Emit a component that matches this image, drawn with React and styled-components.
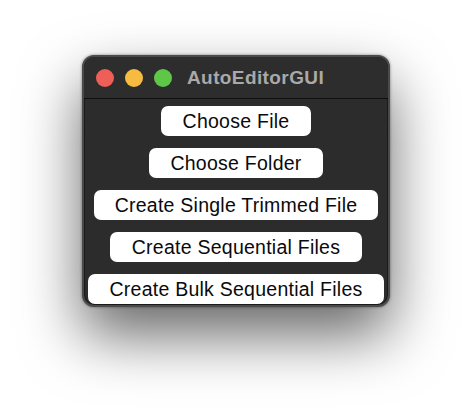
import React from "react";
import styled, { createGlobalStyle } from "styled-components";

const Global = createGlobalStyle`
  html, body { margin: 0; padding: 0; background: #ffffff; }
  body { font-family: "Liberation Sans", Arial, sans-serif; }
`;

const Stage = styled.div`
  width: 474px;
  height: 417px;
  box-sizing: border-box;
  padding: 55px 0 0 82px;
  background: #ffffff;
  overflow: hidden;
`;

const Window = styled.div`
  width: 308px;
  height: 252px;
  box-sizing: border-box;
  background: #2c2c2c;
  border-radius: 12px;
  border: 2px solid #4a4a4a;
  box-shadow: 0 0 0 1px #1a1a1a inset, 0 28px 60px rgba(0, 0, 0, 0.6), 0 0 3px rgba(0,0,0,0.45);
  display: flex;
  flex-direction: column;
  overflow: hidden;
`;

const TitleBar = styled.div`
  height: 41px;
  flex: none;
  display: flex;
  align-items: center;
  gap: 11px;
  padding-left: 12px;
  border-bottom: 1px solid #0f0f0f;
  background: #2d2d2d;
`;

const Light = styled.span`
  width: 18px;
  height: 18px;
  border-radius: 50%;
  background: ${(p) => p.$color};
  flex: none;
`;

const Title = styled.span`
  margin-left: 4px;
  color: #a9a9a9;
  font-family: "Liberation Sans", Arial, sans-serif;
  font-weight: bold;
  font-size: 19px;
  letter-spacing: 0.4px;
`;

const Body = styled.div`
  flex: 1;
  display: flex;
  flex-direction: column;
  align-items: center;
  gap: 12px;
  padding-top: 7px;
`;

const Button = styled.button`
  height: 30px;
  box-sizing: border-box;
  padding: 0 ${(p) => p.$pad}px;
  border: none;
  border-radius: 7px;
  background: #ffffff;
  color: #0a0a0a;
  font-family: "Liberation Sans", Arial, sans-serif;
  font-size: 19.5px;
  letter-spacing: 0.25px;
  line-height: 30px;
  white-space: nowrap;
`;

const buttons = [
  ["Choose File", 22],
  ["Choose Folder", 21],
  ["Create Single Trimmed File", 21],
  ["Create Sequential Files", 22],
  ["Create Bulk Sequential Files", 21],
];

export default function App() {
  return (
    <>
      <Global />
      <Stage>
        <Window>
          <TitleBar>
            <Light $color="#ee5f57" />
            <Light $color="#f6bb40" />
            <Light $color="#5fc748" />
            <Title>AutoEditorGUI</Title>
          </TitleBar>
          <Body>
            {buttons.map(([label, pad]) => (
              <Button key={label} $pad={pad}>{label}</Button>
            ))}
          </Body>
        </Window>
      </Stage>
    </>
  );
}
